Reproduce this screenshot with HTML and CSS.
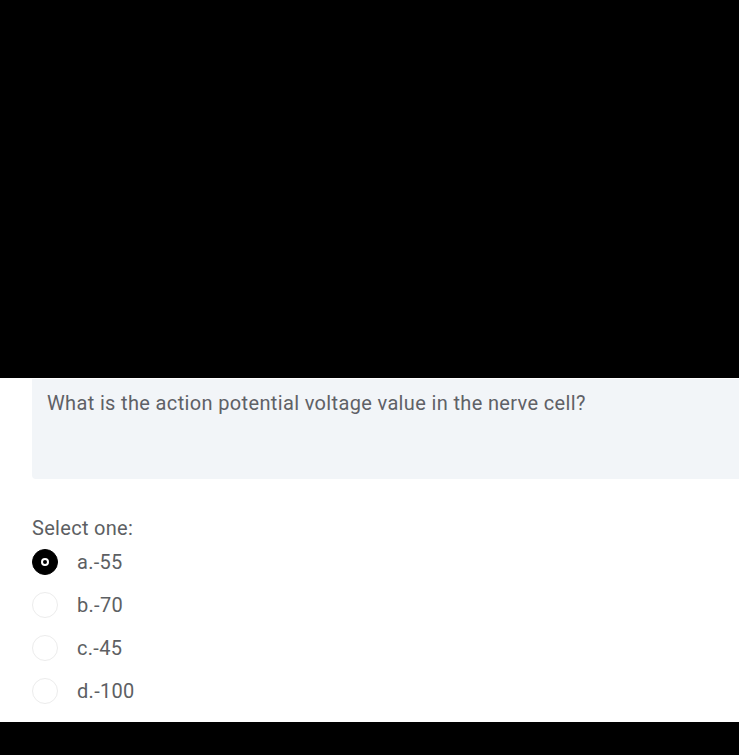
FILE: index.html
```html
<!DOCTYPE html>
<html>
<head>
<meta charset="utf-8">
<link rel="stylesheet" href="styles.css">
</head>
<body>
<div class="top"></div>
<main class="panel">
  <div class="question">What is the action potential voltage value in the nerve cell?</div>
  <div class="prompt">Select one:</div>
  <ul class="options">
    <li class="option"><span class="radio checked"></span><span class="label">a.-55</span></li>
    <li class="option"><span class="radio"></span><span class="label">b.-70</span></li>
    <li class="option"><span class="radio"></span><span class="label">c.-45</span></li>
    <li class="option"><span class="radio"></span><span class="label">d.-100</span></li>
  </ul>
</main>
</body>
</html>
```
FILE: styles.css
```css
html, body {
  margin: 0;
  padding: 0;
  background: #000;
  font-family: Roboto, "Liberation Sans", sans-serif;
}
.top {
  height: 378px;
  background: #000;
}
.panel {
  background: #fff;
  height: 344px;
  padding-top: 1px;
  box-sizing: border-box;
}
.question {
  margin-left: 32px;
  height: 100px;
  box-sizing: border-box;
  padding: 12px 15px;
  background: #f2f5f8;
  border-bottom-left-radius: 4px;
  color: #5f6166;
  font-size: 20px;
  letter-spacing: 0.35px;
  line-height: 24px;
}
.prompt {
  margin: 37px 0 0 32px;
  font-size: 20px;
  letter-spacing: 0.3px;
  line-height: 24px;
  color: #5d5f63;
}
.options {
  list-style: none;
  margin: 0;
  padding: 0 0 0 32px;
}
.option {
  display: flex;
  align-items: center;
  height: 43px;
}
.radio {
  width: 26px;
  height: 26px;
  border-radius: 50%;
  border: 1px solid #ececec;
  box-sizing: border-box;
  background: #fff;
  display: flex;
  align-items: center;
  justify-content: center;
  margin-right: 19px;
}
.radio.checked {
  background: #000;
  border-color: #000;
}
.radio.checked::after {
  content: "";
  width: 4px;
  height: 4px;
  border-radius: 50%;
  background: #000;
  border: 2px solid #fff;
}
.label {
  font-size: 20px;
  letter-spacing: 0.3px;
  color: #5d5f63;
}
```
